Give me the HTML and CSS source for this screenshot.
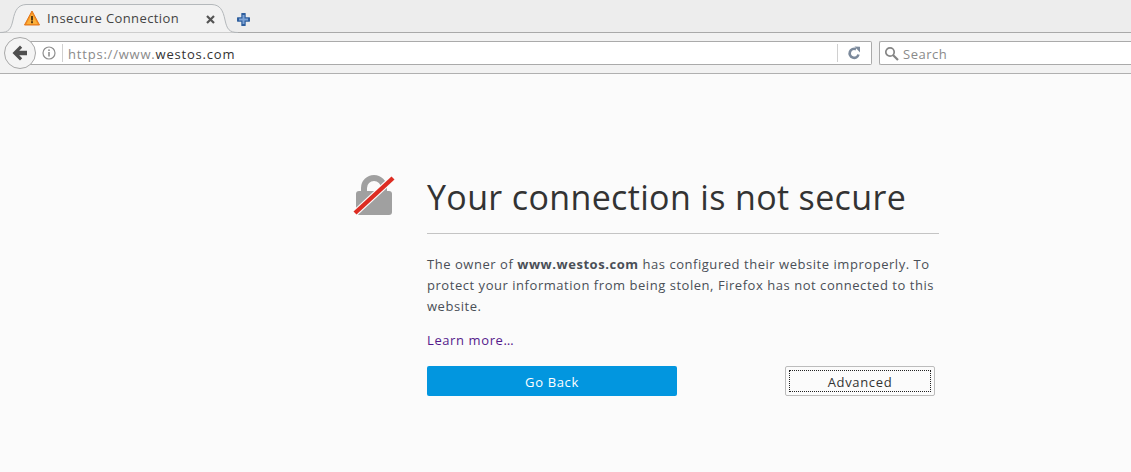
FILE: index.html
```html
<!DOCTYPE html>
<html lang="en">
<head>
  <meta charset="UTF-8">
  <title>Insecure Connection</title>
  <link rel="stylesheet" href="styles.css">
</head>
<body>
  <div class="tabbar">
    <div class="tab">
      <svg class="tab-shape" width="244" height="30" viewBox="0 0 244 30">
        <path d="M0 28.5C9 28.5 11 25 13 16C15 6 18 1 26 .5L212 .5C220 1 223 6 225 16C227 25 229 28.5 238 28.5" fill="#f2f2f2" stroke="#b4b8bb"/>
      </svg>
      <svg class="tab-icon" width="16" height="16" viewBox="0 0 16 16">
        <path d="M8 1L15.5 15H.5Z" fill="#f6901e" stroke="#e2761a" stroke-linejoin="round"/>
        <path d="M8 3.5L13.5 14H2.5Z" fill="#fbb03b"/>
        <rect x="7" y="6" width="2" height="4.5" fill="#5a3a10"/>
        <rect x="7" y="11.2" width="2" height="2" fill="#5a3a10"/>
      </svg>
      <span class="tab-title">Insecure Connection</span>
      <svg class="tab-close" width="9" height="9" viewBox="0 0 9 9">
        <path d="M1 1L8 8M8 1L1 8" stroke="#555" stroke-width="2.2"/>
      </svg>
    </div>
    <svg class="new-tab" width="13" height="13" viewBox="0 0 13 13">
      <path d="M6.5 1V12M1 6.5H12" stroke="#2f5f9e" stroke-width="4.4" stroke-linecap="round"/>
      <path d="M6.5 2V11M2 6.5H11" stroke="#7da3d6" stroke-width="2"/>
    </svg>
  </div>

  <div class="navbar">
    <div class="back-btn">
      <svg width="16" height="16" viewBox="0 0 16 16">
        <path d="M8 .5L.5 8L8 15.5L10.2 13.2L7.2 10.2H15V5.8H7.2L10.2 2.8Z" fill="#4f4f4f"/>
      </svg>
    </div>
    <div class="urlbar">
      <svg class="info-icon" width="14" height="14" viewBox="0 0 14 14">
        <circle cx="7" cy="7" r="6" fill="none" stroke="#8f8f8f" stroke-width="1.2"/>
        <rect x="6.2" y="6" width="1.6" height="4.5" fill="#8f8f8f"/>
        <rect x="6.2" y="3.4" width="1.6" height="1.6" fill="#8f8f8f"/>
      </svg>
      <span class="url-sep"></span>
      <span class="url"><span class="url-dim">https://www.</span>westos.com</span>
      <span class="url-sep url-sep-right"></span>
      <svg class="reload" width="14" height="14" viewBox="0 0 14 14">
        <path d="M11.5 8.5A4.5 4.5 0 1 1 9 3.2" fill="none" stroke="#7c8a9c" stroke-width="2.6"/>
        <path d="M7.5 .5L13 .8V6.5Z" fill="#7c8a9c"/>
      </svg>
    </div>
    <div class="searchbar">
      <svg width="15" height="15" viewBox="0 0 15 15">
        <circle cx="6" cy="6" r="4.2" fill="none" stroke="#858585" stroke-width="1.7"/>
        <path d="M9 9L14 14" stroke="#858585" stroke-width="2.2"/>
      </svg>
      <span>Search</span>
    </div>
  </div>

  <div class="page">
    <svg class="lock" width="42" height="44" viewBox="0 0 42 44">
      <path d="M8 19V13A13 13 0 0 1 34 13V19H28V13A7 7 0 0 0 14 13V19Z" fill="#a0a0a0"/>
      <rect x="3" y="16" width="36" height="24" rx="3" fill="#a0a0a0"/>
      <path d="M2 38L40 3" stroke="#fbfbfb" stroke-width="6.5"/>
      <path d="M2 38L40 3" stroke="#dd2c22" stroke-width="4.4"/>
    </svg>
    <div class="content">
      <h1>Your connection is not secure</h1>
      <p>The owner of <b>www.westos.com</b> has configured their website improperly. To protect your information from being stolen, Firefox has not connected to this website.</p>
      <a class="learn" href="#">Learn more…</a>
      <div class="buttons">
        <button class="primary">Go Back</button>
        <button class="advanced"><span>Advanced</span></button>
      </div>
    </div>
  </div>
</body>
</html>
```
FILE: styles.css
```css
html, body {
  margin: 0;
  height: 100%;
  overflow: hidden;
}
body {
  font-family: "Open Sans", "Noto Sans", sans-serif;
  background-color: #fbfbfb;
  color: #333;
}
.tabbar {
  height: 32px;
  background-color: #ededed;
  border-bottom: 1px solid #a9a9a9;
  display: flex;
  position: relative;
}
.tab {
  position: relative;
  width: 226px;
  padding: 3px 0 0 24px;
  display: flex;
  align-items: center;
  box-sizing: border-box;
  height: 33px;
}
.tab-shape {
  position: absolute;
  left: 0;
  top: 4px;
}
.tab-icon {
  position: relative;
  flex: none;
}
.tab-title {
  position: relative;
  font-size: 13px;
  margin-left: 7px;
  letter-spacing: .4px;
  color: #444;
  white-space: nowrap;
}
.tab-close {
  position: absolute;
  left: 206px;
  top: 15px;
}
.new-tab {
  margin: 13px 0 0 11px;
}
.navbar {
  height: 40px;
  background-color: #f2f2f2;
  border-bottom: 1px solid #b0b0b0;
  display: flex;
  align-items: center;
  padding-left: 4px;
}
.back-btn {
  width: 30px;
  height: 30px;
  border: 1px solid #a8a8a8;
  border-radius: 50%;
  background-color: #f4f4f4;
  display: flex;
  align-items: center;
  justify-content: center;
  position: relative;
  z-index: 1;
  flex: none;
}
.urlbar {
  margin-left: -6px;
  width: 842px;
  height: 24px;
  box-sizing: border-box;
  border: 1px solid #aaa;
  border-left: none;
  border-radius: 0 2px 2px 0;
  background-color: #fff;
  display: flex;
  align-items: center;
  padding-left: 12px;
  flex: none;
}
.info-icon {
  flex: none;
}
.url-sep {
  width: 1px;
  height: 18px;
  background-color: #d0d0d0;
  margin-left: 6px;
}
.url {
  font-size: 13px;
  letter-spacing: .8px;
  margin-left: 5px;
  padding-top: 1px;
  color: #333;
}
.url-dim {
  color: #8a8a8a;
}
.url-sep-right {
  margin-left: auto;
}
.reload {
  margin: 0 10px 0 9px;
}
.searchbar {
  margin-left: 7px;
  flex: 1;
  height: 24px;
  box-sizing: border-box;
  border: 1px solid #aaa;
  border-right: none;
  border-radius: 2px 0 0 2px;
  background-color: #fff;
  display: flex;
  align-items: center;
  padding-left: 4px;
  font-size: 13px;
  letter-spacing: .5px;
  color: #8a8a8a;
}
.searchbar span {
  margin-left: 4px;
  padding-top: 1px;
}
.page {
  display: flex;
  padding: 101px 0 0 353px;
  align-items: flex-start;
}
.lock {
  flex: none;
  margin-right: 32px;
}
.content {
  width: 512px;
  margin-top: -1px;
}
h1 {
  margin: 0;
  font-size: 34px;
  font-weight: 400;
  line-height: 47px;
  padding-bottom: 12px;
  border-bottom: 1px solid #c4c4c4;
  letter-spacing: .35px;
  color: #333;
  white-space: nowrap;
}
p {
  margin: 20px 0 0;
  font-size: 13px;
  line-height: 21px;
  letter-spacing: .54px;
  color: #4a4f57;
}
.learn {
  display: block;
  margin-top: 13px;
  font-size: 13px;
  line-height: 20px;
  letter-spacing: .6px;
  color: #551a8b;
  text-decoration: none;
}
.buttons {
  display: flex;
  justify-content: space-between;
  align-items: center;
  margin-top: 16px;
  padding-right: 4px;
}
button {
  font-family: inherit;
  font-size: 13px;
  height: 30px;
  letter-spacing: .65px;
}
.primary {
  width: 250px;
  padding-top: 3px;
  border: none;
  border-radius: 2px;
  background-color: #0296df;
  color: #fff;
}
.advanced {
  width: 150px;
  padding: 3px;
  border: 1px solid #bcbcbc;
  border-radius: 2px;
  background-color: #fbfbfb;
  color: #333;
}
.advanced span {
  display: block;
  height: 100%;
  box-sizing: border-box;
  border: 1px dotted #222;
  line-height: 22px;
}
```
